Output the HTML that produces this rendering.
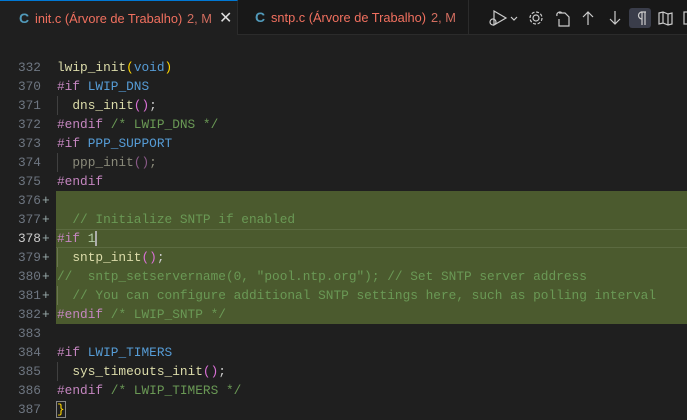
<!DOCTYPE html>
<html><head><meta charset="utf-8"><style>
*{margin:0;padding:0;box-sizing:border-box}
body{width:687px;height:420px;background:#1f1f1f;overflow:hidden;position:relative;font-family:"Liberation Sans",sans-serif}
.tabs{position:absolute;left:0;top:0;width:687px;height:35px;background:#181818;border-bottom:1px solid #2b2b2b}
.tab{position:absolute;top:0;height:35px;font-size:12.8px;color:#f1705f;line-height:35px}
.t1{left:0;width:238px;background:#1f1f1f;border-top:1px solid #0078d4;border-right:1px solid #2b2b2b;height:35px}
.t2{left:239px;width:230px;border-right:1px solid #2b2b2b}
.c{color:#519aba;font-weight:bold;font-size:14px;position:absolute;top:0}
.code{position:absolute;left:0;top:58px;font-family:"Liberation Mono",monospace;font-size:12.8px}
.ln{position:absolute;height:19px;line-height:19px;width:687px}
.num{position:absolute;left:5px;width:36px;text-align:right;color:#6e7681}
.txt{position:absolute;left:57px;white-space:pre;color:#cccccc}
.g{background:#4b5a2e}
.p{color:#c586c0}.b{color:#569cd6}.cm{color:#6a9955}.y{color:#ffd700}.f{color:#dcdcaa}.m{color:#da70d6}
.plus{position:absolute;left:42px;color:#9aa;}
.guide{position:absolute;left:57px;width:1px;height:19px;background:#404040}
</style></head><body>
<div class="tabs">
 <div class="tab t1"><span class="c" style="left:19px">C</span><span style="position:absolute;left:35px">init.c (Árvore de Trabalho)</span><span style="position:absolute;left:187px;color:#d16d5f">2, M</span><span style="position:absolute;left:219px;color:#ddd;font-size:16px">✕</span></div>
 <div class="tab t2"><span class="c" style="left:16px">C</span><span style="position:absolute;left:32px">sntp.c (Árvore de Trabalho)</span><span style="position:absolute;left:192px;color:#d16d5f">2, M</span></div>
 <svg style="position:absolute;left:485px;top:8px" width="202" height="20" fill="none" stroke="#ccc" stroke-width="1.2">
  <path d="M9 3 L21 10 L9 17 Z"/><circle cx="8" cy="14" r="3"/><path d="M26 9 l3 3 l3 -3"/>
  <circle cx="51" cy="10" r="3"/><circle cx="51" cy="10" r="6" stroke-dasharray="3 1.7"/>
  <path d="M74 5 h6 l4 4 v9 h-10 v-7 M72 8 a3 3 0 0 1 5 -3"/>
  <path d="M103 17 V4 M98 9 l5 -5 l5 5"/>
  <path d="M130 3 V16 M125 11 l5 5 l5 -5"/>
  <rect x="144" y="0" width="22" height="20" rx="3" fill="#3a3d4a" stroke="none"/>
  <path d="M157 4 V17 M160 4 V17 M156 4 h5 M157 4 a3 3 0 0 0 0 7" />
  <path d="M174 5 l4 -1 l5 2 l4 -1 v11 l-4 1 l-5 -2 l-4 1 Z M178 4 v11 M183 6 v11"/>
  <rect x="199" y="4" width="4" height="12"/>
 </svg>
</div>
<div style="position:absolute;left:0;top:191px;width:687px;height:133px" class="g"></div>
<div style="position:absolute;left:0;top:191px;width:56px;height:133px;background:#1f1f1f"></div>
<div style="position:absolute;left:56px;top:229px;width:631px;height:19px;border-top:1px solid #5b6a40;border-bottom:1px solid #5b6a40"></div>
<div class="code">
<div class="ln" style="top:0"><span class="num">332</span><span class="txt"><span class="f">lwip_init</span><span class="y">(</span><span class="b">void</span><span class="y">)</span></span></div>
<div class="ln" style="top:19px"><span class="num">370</span><span class="txt"><span class="p">#if</span> <span class="b">LWIP_DNS</span></span></div>
<div class="ln" style="top:38px"><span class="num">371</span><span class="guide"></span><span class="txt">  <span class="f">dns_init</span><span class="m">()</span>;</span></div>
<div class="ln" style="top:57px"><span class="num">372</span><span class="txt"><span class="p">#endif</span> <span class="cm">/* LWIP_DNS */</span></span></div>
<div class="ln" style="top:76px"><span class="num">373</span><span class="txt"><span class="p">#if</span> <span class="b">PPP_SUPPORT</span></span></div>
<div class="ln" style="top:95px"><span class="num">374</span><span class="guide"></span><span class="txt" style="color:#8a8a7a">  ppp_init<span style="color:#8a5a88">()</span>;</span></div>
<div class="ln" style="top:114px"><span class="num">375</span><span class="txt"><span class="p">#endif</span></span></div>
<div class="ln" style="top:133px"><span class="num">376</span><span class="plus">+</span></div>
<div class="ln" style="top:152px"><span class="num">377</span><span class="plus">+</span><span class="txt">  <span class="cm">// Initialize SNTP if enabled</span></span></div>
<div class="ln" style="top:171px"><span class="num" style="color:#ccc">378</span><span class="plus">+</span><span class="txt"><span class="p">#if</span> <span style="color:#b5cea8">1</span><span style="border-left:2px solid #aeafad"></span></span></div>
<div class="ln" style="top:190px"><span class="num">379</span><span class="plus">+</span><span class="guide" style="background:#6a7550"></span><span class="txt">  <span class="f">sntp_init</span><span class="m">()</span>;</span></div>
<div class="ln" style="top:209px"><span class="num">380</span><span class="plus">+</span><span class="txt cm">//  sntp_setservername(0, "pool.ntp.org"); // Set SNTP server address</span></div>
<div class="ln" style="top:228px"><span class="num">381</span><span class="plus">+</span><span class="guide" style="background:#6a7550"></span><span class="txt">  <span class="cm">// You can configure additional SNTP settings here, such as polling interval</span></span></div>
<div class="ln" style="top:247px"><span class="num">382</span><span class="plus">+</span><span class="txt"><span class="p">#endif</span> <span class="cm">/* LWIP_SNTP */</span></span></div>
<div class="ln" style="top:266px"><span class="num">383</span></div>
<div class="ln" style="top:285px"><span class="num">384</span><span class="txt"><span class="p">#if</span> <span class="b">LWIP_TIMERS</span></span></div>
<div class="ln" style="top:304px"><span class="num">385</span><span class="guide"></span><span class="txt">  <span class="f">sys_timeouts_init</span><span class="m">()</span>;</span></div>
<div class="ln" style="top:323px"><span class="num">386</span><span class="txt"><span class="p">#endif</span> <span class="cm">/* LWIP_TIMERS */</span></span></div>
<div class="ln" style="top:342px"><span class="num">387</span><span class="txt"><span class="y" style="outline:1px solid #888">}</span></span></div>
</div>
</body></html>
